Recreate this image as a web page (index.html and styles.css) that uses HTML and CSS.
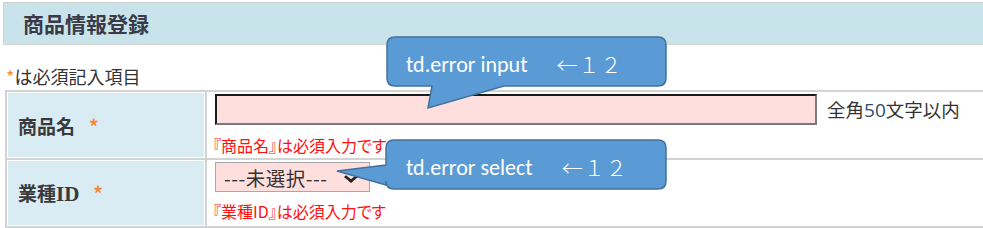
FILE: index.html
```html
<!DOCTYPE html>
<html lang="ja">
<head>
  <meta charset="UTF-8" />
  <title>商品情報登録</title>
  <link rel="stylesheet" href="styles.css">
</head>
<body>
  <h1 class="page-title">商品情報登録</h1>

  <p class="note"><span class="req">*</span>は必須記入項目</p>

  <table class="form">
    <tr>
      <th>商品名<span class="req">*</span></th>
      <td class="error">
        <div class="field">
          <input type="text" class="text-input" />
          <span class="hint">全角<span class="num">50</span>文字以内</span>
        </div>
        <div class="error-msg">『商品名』は必須入力です</div>
      </td>
    </tr>
    <tr>
      <th>業種<span class="latin">ID</span><span class="req">*</span></th>
      <td class="error">
        <div class="field">
          <span class="select-wrap">
            <select class="select-input">
              <option>---未選択---</option>
            </select>
          </span>
        </div>
        <div class="error-msg">『業種ID』は必須入力です</div>
      </td>
    </tr>
  </table>

  <!-- annotation callouts -->
  <div class="callout callout-input">
    <svg class="callout-shape" width="300" height="80" viewBox="0 0 300 80">
      <path d="M9 1 H272 Q280 1 280 9 V42 Q280 50 272 50 H118 L42 72 L46 50 H9 Q1 50 1 42 V9 Q1 1 9 1 Z" />
    </svg>
    <span class="callout-text">td.error input</span><span class="callout-arrow">←１２</span>
  </div>

  <div class="callout callout-select">
    <svg class="callout-shape" width="340" height="60" viewBox="0 0 340 60">
      <path d="M58 1 H322 Q330 1 330 9 V42 Q330 50 322 50 H58 Q50 50 50 42 V46 L1 32 L50 26 V9 Q50 1 58 1 Z" />
    </svg>
    <span class="callout-text">td.error select</span><span class="callout-arrow">←１２</span>
  </div>
</body>
</html>
```

FILE: styles.css
```css
body {
  margin: 0;
  font-family: "Noto Sans CJK JP", "Noto Sans", sans-serif;
  color: #333;
  background: #fff;
  position: relative;
  overflow: hidden;
}
.page-title {
  margin: 2px 0 0 3px;
  height: 41px;
  line-height: 41px;
  padding-left: 19px;
  background: #c9e3ea;
  border: 1px solid #d2d2d2;
  border-right: none;
  font-size: 21px;
  font-weight: bold;
  color: #3a3a48;
}
.note {
  margin: 21px 0 0 6px;
  font-size: 18px;
  line-height: 20px;
}
.req {
  color: #f58a3a;
}
.form {
  margin: 4px 0 0 5px;
  width: 990px;
  border-collapse: collapse;
  border: 2px solid #d3d3d3;
}
.form tr {
  height: 68px;
}
.form th {
  width: 187px;
  padding: 0 0 0 11px;
  text-align: left;
  vertical-align: middle;
  background: #d9ebf3;
  border: 2px solid #d3d3d3;
  box-shadow: inset 0 0 0 1px #fff;
  font-size: 19px;
  font-weight: bold;
  color: #3a3a3a;
}
.form th .req {
  margin-left: 14px;
}
.form th .latin {
  font-family: "Liberation Serif", serif;
  font-size: 21px;
}
.form td {
  padding: 2px 8px 0 8px;
  vertical-align: top;
  border: 2px solid #d3d3d3;
}
.field {
  display: flex;
  align-items: center;
  gap: 10px;
}
.text-input {
  width: 598px;
  height: 27px;
  padding: 0;
  margin: 0;
  background: #ffdede;
  border: 2px solid;
  border-color: #1a1a1a #7a7a7a #7a7a7a #1a1a1a;
}
.hint {
  font-size: 18.5px;
  color: #333;
}
.hint .num {
  font-family: "Open Sans", sans-serif;
  font-size: 19px;
  color: #2f4b6e;
}
.error-msg {
  margin-top: 10px;
  margin-left: -2px;
  font-size: 16px;
  line-height: 20px;
  font-feature-settings: "palt";
  color: #ff1010;
}
.form tr + tr .error-msg {
  margin-top: 9px;
}
.select-wrap {
  position: relative;
  display: inline-block;
}
.select-wrap::after {
  content: "";
  position: absolute;
  left: 131px;
  top: 10px;
  width: 7px;
  height: 7px;
  border-right: 3px solid #222;
  border-bottom: 3px solid #222;
  transform: scaleY(0.8) rotate(45deg);
  pointer-events: none;
}
.select-input {
  appearance: none;
  -webkit-appearance: none;
  width: 155px;
  height: 30px;
  margin: 0;
  padding: 0 0 0 8px;
  background: #ffdede;
  border: 1px solid #a8a8a8;
  border-radius: 0;
  font-family: "Noto Sans CJK JP", sans-serif;
  font-size: 19.5px;
  letter-spacing: 0.5px;
  color: #333;
}

/* annotation callouts */
.callout {
  position: absolute;
  left: 387px;
  width: 281px;
  height: 50px;
  display: flex;
  align-items: center;
  padding: 4px 0 0 19px;
  box-sizing: border-box;
  color: #fff;
}
.callout-input {
  top: 37px;
}
.callout-select {
  top: 140px;
}
.callout-shape {
  position: absolute;
  left: -1px;
  top: -1px;
  overflow: visible;
}
.callout-select .callout-shape {
  left: -51px;
}
.callout-shape path {
  fill: #5b9bd5;
  stroke: #41719c;
  stroke-width: 1.5;
}
.callout-text {
  position: relative;
  font-family: Calibri, Carlito, Lato, sans-serif;
  font-size: 22px;
}
.callout-arrow {
  position: relative;
  margin-left: 29px;
  font-family: "Noto Sans CJK JP", sans-serif;
  font-weight: 300;
  font-size: 21px;
  letter-spacing: 1px;
}
```
